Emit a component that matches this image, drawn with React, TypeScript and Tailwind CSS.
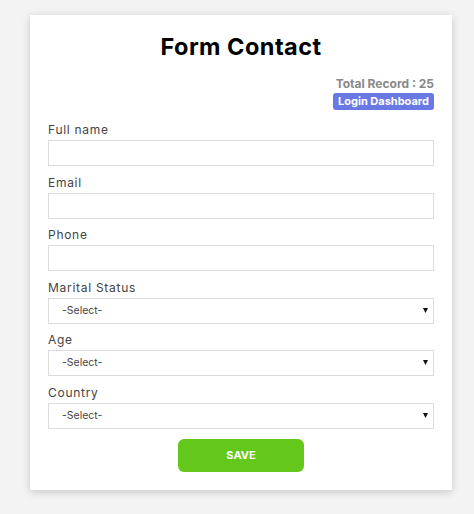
const font = { fontFamily: 'Inter, "Open Sans", "Liberation Sans", sans-serif' }

function Field({ label }: { label: string }) {
  return (
    <div className="flex flex-col">
      <label className="text-[12px] leading-[14px] tracking-[0.06em] text-[#444] font-normal mb-[3px]">{label}</label>
      <input type="text" className="h-[26px] w-full border border-[#dcdcdc] bg-white outline-none" />
    </div>
  )
}

function SelectField({ label }: { label: string }) {
  return (
    <div className="flex flex-col">
      <label className="text-[12px] leading-[14px] tracking-[0.06em] text-[#444] font-normal mb-[3px]">{label}</label>
      <div className="relative">
        <select className="block h-[26px] w-full appearance-none border border-[#dcdcdc] bg-white pl-[13px] text-[10.5px] text-[#444] outline-none">
          <option>-Select-</option>
        </select>
        <svg className="pointer-events-none absolute right-[6px] top-[10px]" width="5" height="5" viewBox="0 0 5 5">
          <path d="M0 0H5L2.5 5Z" fill="#111" />
        </svg>
      </div>
    </div>
  )
}

export default function App() {
  return (
    <div className="min-h-[514px] w-[474px] bg-[#f3f3f3] pt-[15px] pl-[30px]" style={font}>
      <div className="w-[422px] bg-white px-[18px] pt-[19px] pb-[18px] shadow-[0_2px_8px_rgba(0,0,0,0.18)]">
        <h1 className="text-center text-[23.5px] font-bold leading-[26px] text-black tracking-[0.02em]">Form Contact</h1>
        <div className="mt-[17px] flex flex-col items-end">
          <span className="text-[12px] font-bold leading-[14px] text-[#888]">Total Record : 25</span>
          <button className="mt-[2px] rounded-[3px] bg-[#6a78e4] px-[5px] py-[2px] text-[11px] font-bold leading-[13px] text-white">
            Login Dashboard
          </button>
        </div>
        <div className="mt-[13px] flex flex-col gap-[9.5px]">
          <Field label="Full name" />
          <Field label="Email" />
          <Field label="Phone" />
          <SelectField label="Marital Status" />
          <SelectField label="Age" />
          <SelectField label="Country" />
        </div>
        <div className="mt-[10px] flex justify-center">
          <button className="h-[33px] w-[126px] rounded-[6px] bg-[#64c81c] text-[11px] font-bold text-white">SAVE</button>
        </div>
      </div>
    </div>
  )
}
